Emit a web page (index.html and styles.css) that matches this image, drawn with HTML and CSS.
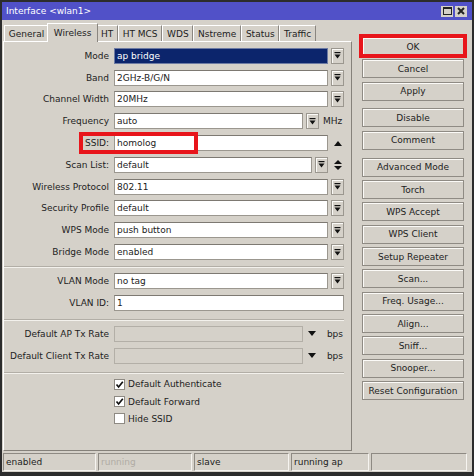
FILE: index.html
```html
<!DOCTYPE html>
<html>
<head>
<meta charset="utf-8">
<link rel="stylesheet" href="styles.css">
</head>
<body>
<div class="window">
  <div class="titlebar">
    <span class="title">Interface &lt;wlan1&gt;</span>
    <div class="wbtns">
      <span class="wbtn"><svg width="9" height="8" viewBox="0 0 9 8"><rect x="0.5" y="0.5" width="8" height="7" fill="none" stroke="#222" stroke-width="1"/><rect x="0" y="0" width="9" height="2" fill="#222"/></svg></span>
      <span class="wbtn"><svg width="8" height="8" viewBox="0 0 8 8"><path d="M1 1 L7 7 M7 1 L1 7" stroke="#222" stroke-width="2"/></svg></span>
    </div>
  </div>
  <div class="main">
    <div class="left">
      <div class="tabs">
        <div class="tab">General</div>
        <div class="tab active">Wireless</div>
        <div class="tab">HT</div>
        <div class="tab">HT MCS</div>
        <div class="tab">WDS</div>
        <div class="tab">Nstreme</div>
        <div class="tab">Status</div>
        <div class="tab">Traffic</div>
      </div>
      <div class="panel">
        <div class="row"><span class="lbl">Mode</span><div class="field"><div class="input sel">ap bridge</div><span class="dd"><svg width="7" height="7" viewBox="0 0 7 7"><rect x="0.5" y="0" width="6" height="1.2" fill="#111"/><path d="M0.5 2.5 H6.5 L3.5 6.5 Z" fill="#111"/></svg></span></div></div>
        <div class="row"><span class="lbl">Band</span><div class="field"><div class="input">2GHz-B/G/N</div><span class="dd"><svg width="7" height="7" viewBox="0 0 7 7"><rect x="0.5" y="0" width="6" height="1.2" fill="#111"/><path d="M0.5 2.5 H6.5 L3.5 6.5 Z" fill="#111"/></svg></span></div></div>
        <div class="row"><span class="lbl">Channel Width</span><div class="field"><div class="input">20MHz</div><span class="dd"><svg width="7" height="7" viewBox="0 0 7 7"><rect x="0.5" y="0" width="6" height="1.2" fill="#111"/><path d="M0.5 2.5 H6.5 L3.5 6.5 Z" fill="#111"/></svg></span></div></div>
        <div class="row"><span class="lbl">Frequency</span><div class="field"><div class="input">auto</div><span class="dd"><svg width="7" height="7" viewBox="0 0 7 7"><rect x="0.5" y="0" width="6" height="1.2" fill="#111"/><path d="M0.5 2.5 H6.5 L3.5 6.5 Z" fill="#111"/></svg></span><span class="unit mhz">MHz</span></div></div>
        <div class="row ssid"><span class="lbl">SSID:</span><div class="field"><div class="input">homolog</div><span class="arr"><svg width="8" height="5" viewBox="0 0 8 5"><path d="M0 5 H8 L4 0 Z" fill="#111"/></svg></span></div><span class="hl hl-ssid"></span></div>
        <div class="row"><span class="lbl">Scan List:</span><div class="field"><div class="input">default</div><span class="dd"><svg width="7" height="7" viewBox="0 0 7 7"><rect x="0.5" y="0" width="6" height="1.2" fill="#111"/><path d="M0.5 2.5 H6.5 L3.5 6.5 Z" fill="#111"/></svg></span><span class="arr"><svg width="8" height="10" viewBox="0 0 8 10"><path d="M0 4 H8 L4 0 Z M0 6 H8 L4 10 Z" fill="#111"/></svg></span></div></div>
        <div class="row"><span class="lbl">Wireless Protocol</span><div class="field"><div class="input">802.11</div><span class="dd"><svg width="7" height="7" viewBox="0 0 7 7"><rect x="0.5" y="0" width="6" height="1.2" fill="#111"/><path d="M0.5 2.5 H6.5 L3.5 6.5 Z" fill="#111"/></svg></span></div></div>
        <div class="row"><span class="lbl">Security Profile</span><div class="field"><div class="input">default</div><span class="dd"><svg width="7" height="7" viewBox="0 0 7 7"><rect x="0.5" y="0" width="6" height="1.2" fill="#111"/><path d="M0.5 2.5 H6.5 L3.5 6.5 Z" fill="#111"/></svg></span></div></div>
        <div class="row"><span class="lbl">WPS Mode</span><div class="field"><div class="input">push button</div><span class="dd"><svg width="7" height="7" viewBox="0 0 7 7"><rect x="0.5" y="0" width="6" height="1.2" fill="#111"/><path d="M0.5 2.5 H6.5 L3.5 6.5 Z" fill="#111"/></svg></span></div></div>
        <div class="row"><span class="lbl">Bridge Mode</span><div class="field"><div class="input">enabled</div><span class="dd"><svg width="7" height="7" viewBox="0 0 7 7"><rect x="0.5" y="0" width="6" height="1.2" fill="#111"/><path d="M0.5 2.5 H6.5 L3.5 6.5 Z" fill="#111"/></svg></span></div></div>
        <div class="sep sep1"></div>
        <div class="row"><span class="lbl">VLAN Mode</span><div class="field"><div class="input">no tag</div><span class="dd"><svg width="7" height="7" viewBox="0 0 7 7"><rect x="0.5" y="0" width="6" height="1.2" fill="#111"/><path d="M0.5 2.5 H6.5 L3.5 6.5 Z" fill="#111"/></svg></span></div></div>
        <div class="row"><span class="lbl">VLAN ID:</span><div class="field"><div class="input">1</div></div></div>
        <div class="sep sep2"></div>
        <div class="row"><span class="lbl">Default AP Tx Rate</span><div class="field"><div class="input dis"></div><span class="darr"><svg width="8" height="5" viewBox="0 0 8 5"><path d="M0 0 H8 L4 5 Z" fill="#111"/></svg></span><span class="unit bps">bps</span></div></div>
        <div class="row"><span class="lbl">Default Client Tx Rate</span><div class="field"><div class="input dis"></div><span class="darr"><svg width="8" height="5" viewBox="0 0 8 5"><path d="M0 0 H8 L4 5 Z" fill="#111"/></svg></span><span class="unit bps">bps</span></div></div>
        <div class="sep sep3"></div>
        <div class="cbrow"><span class="cb"><svg width="9" height="9" viewBox="0 0 9 9"><path d="M1.5 4.5 L3.6 7 L7.8 1.8" fill="none" stroke="#111" stroke-width="1.7"/></svg></span><span>Default Authenticate</span></div>
        <div class="cbrow"><span class="cb"><svg width="9" height="9" viewBox="0 0 9 9"><path d="M1.5 4.5 L3.6 7 L7.8 1.8" fill="none" stroke="#111" stroke-width="1.7"/></svg></span><span>Default Forward</span></div>
        <div class="cbrow"><span class="cb"></span><span>Hide SSID</span></div>
      </div>
    </div>
    <div class="right">
      <div class="btn ok">OK<span class="hl hl-ok"></span></div>
      <div class="btn">Cancel</div>
      <div class="btn">Apply</div>
      <div class="btn g2">Disable</div>
      <div class="btn">Comment</div>
      <div class="btn g3">Advanced Mode</div>
      <div class="btn">Torch</div>
      <div class="btn">WPS Accept</div>
      <div class="btn">WPS Client</div>
      <div class="btn">Setup Repeater</div>
      <div class="btn">Scan...</div>
      <div class="btn">Freq. Usage...</div>
      <div class="btn">Align...</div>
      <div class="btn">Sniff...</div>
      <div class="btn">Snooper...</div>
      <div class="btn">Reset Configuration</div>
    </div>
  </div>
  <div class="status">
    <div class="sbox">enabled</div>
    <div class="sbox muted">running</div>
    <div class="sbox">slave</div>
    <div class="sbox">running ap</div>
    <div class="sbox"></div>
  </div>
</div>
</body>
</html>
```

FILE: styles.css
```css
* { box-sizing: border-box; }
html, body { margin: 0; padding: 0; }
body {
  background: #2c2c2c;
  width: 474px;
  height: 476px;
  overflow: hidden;
  padding: 2px 2px 4px 2px;
  font-family: "DejaVu Sans", Verdana, sans-serif;
  font-size: 9px;
  color: #222;
}
.window {
  width: 470px;
  height: 470px;
  background: #d5d1c9;
  display: flex;
  flex-direction: column;
}
.titlebar {
  height: 18px;
  flex: none;
  background: #5151c8;
  color: #fff;
  display: flex;
  align-items: center;
  padding: 0 5px 0 4px;
}
.title { flex: 1; letter-spacing: 0; }
.wbtns { display: flex; gap: 2px; }
.wbtn {
  width: 12px;
  height: 11px;
  background: #d5d1c9;
  display: flex;
  align-items: center;
  justify-content: center;
}
.main { flex: 1; display: flex; }
.left {
  width: 349px;
  margin-left: 1px;
  display: flex;
  flex-direction: column;
}
.tabs {
  height: 21px;
  display: flex;
  align-items: flex-end;
  padding-left: 1px;
}
.tab {
  height: 16px;
  padding: 0 3.75px;
  border: 1px solid #fff;
  border-right-color: #8a8680;
  border-bottom: none;
  display: flex;
  align-items: center;
  white-space: nowrap;
}
.tab.active {
  height: 19px;
  margin: 0 -2px -1px;
  padding: 0 5.75px 1px;
  background: #d5d1c9;
  position: relative;
  z-index: 2;
}
.panel {
  height: 410px;
  border: 1px solid #fff;
  border-right-color: #85817a;
  border-bottom-color: #85817a;
  padding-top: 3px;
}
.row {
  height: 21.8px;
  display: flex;
  align-items: center;
  position: relative;
}
.lbl {
  width: 105px;
  flex: none;
  text-align: right;
  white-space: nowrap;
}
.field {
  width: 230px;
  margin-left: 5px;
  display: flex;
  align-items: center;
  gap: 3px;
}
.input {
  flex: 1;
  height: 16px;
  background: #fff;
  border: 1px solid #9b978f;
  border-top-color: #7d7972;
  padding: 0 2px;
  line-height: 14px;
  white-space: nowrap;
  overflow: hidden;
}
.input.sel {
  background: #0c256c;
  color: #fff;
  border-color: #6d7ba3;
}
.input.dis {
  background: #d5d1c9;
  border-color: #b3afa7;
}
.dd {
  width: 13px;
  height: 16px;
  flex: none;
  border: 1px solid #9b978f;
  box-shadow: inset 1px 1px 0 #fbfaf7;
  background: #d5d1c9;
  display: flex;
  align-items: center;
  justify-content: center;
}
.arr {
  width: 13px;
  flex: none;
  display: flex;
  justify-content: center;
}
.darr {
  width: 12px;
  flex: none;
  display: flex;
  justify-content: center;
}
.unit { flex: none; white-space: nowrap; }
.mhz { width: 22px; padding-left: 1px; }
.bps { width: 23px; text-align: right; padding-right: 1px; }
.sep {
  margin-right: 7px;
  border-top: 1px solid #b2aea6;
  border-bottom: 1px solid #f3f1ec;
}
.sep1 { margin-top: 3px; margin-bottom: 2px; }
.sep2 { margin-top: 5px; margin-bottom: 2.5px; }
.sep3 { margin-top: 5px; margin-bottom: 2px; }
.cbrow {
  height: 17.3px;
  display: flex;
  align-items: center;
  padding-left: 110px;
  white-space: nowrap;
}
.cb {
  width: 11px;
  height: 11px;
  background: #fff;
  border: 1px solid #8e8a83;
  margin-right: 3px;
  display: flex;
  align-items: center;
  justify-content: center;
}
.hl {
  position: absolute;
  border: 4px solid #e8151b;
  pointer-events: none;
}
.hl-ssid {
  left: 75px;
  top: 0;
  width: 119px;
  height: 22px;
}
.right {
  width: 102px;
  margin-left: 10px;
  padding-top: 17px;
  display: flex;
  flex-direction: column;
  gap: 3.33px;
}
.btn {
  height: 19px;
  flex: none;
  border: 1px solid #8f8b84;
  box-shadow: inset 1px 1px 0 #fbfaf7;
  display: flex;
  align-items: center;
  justify-content: center;
  white-space: nowrap;
  position: relative;
}
.btn.g2 { margin-top: 4.2px; }
.btn.g3 { margin-top: 4.9px; }
.hl-ok {
  left: -4px;
  right: -4px;
  top: -4px;
  bottom: -3px;
}
.status {
  height: 18px;
  flex: none;
  margin: 1px 5px 1px 1px;
  display: grid;
  grid-template-columns: 93px 94px 95px 78px 1fr;
  gap: 2px;
}
.sbox {
  border: 1px solid #8e8a83;
  border-right-color: #f6f4f0;
  border-bottom-color: #f6f4f0;
  padding-left: 2px;
  line-height: 16px;
  white-space: nowrap;
  overflow: hidden;
}
.sbox.muted { color: #b0aca4; }
```
